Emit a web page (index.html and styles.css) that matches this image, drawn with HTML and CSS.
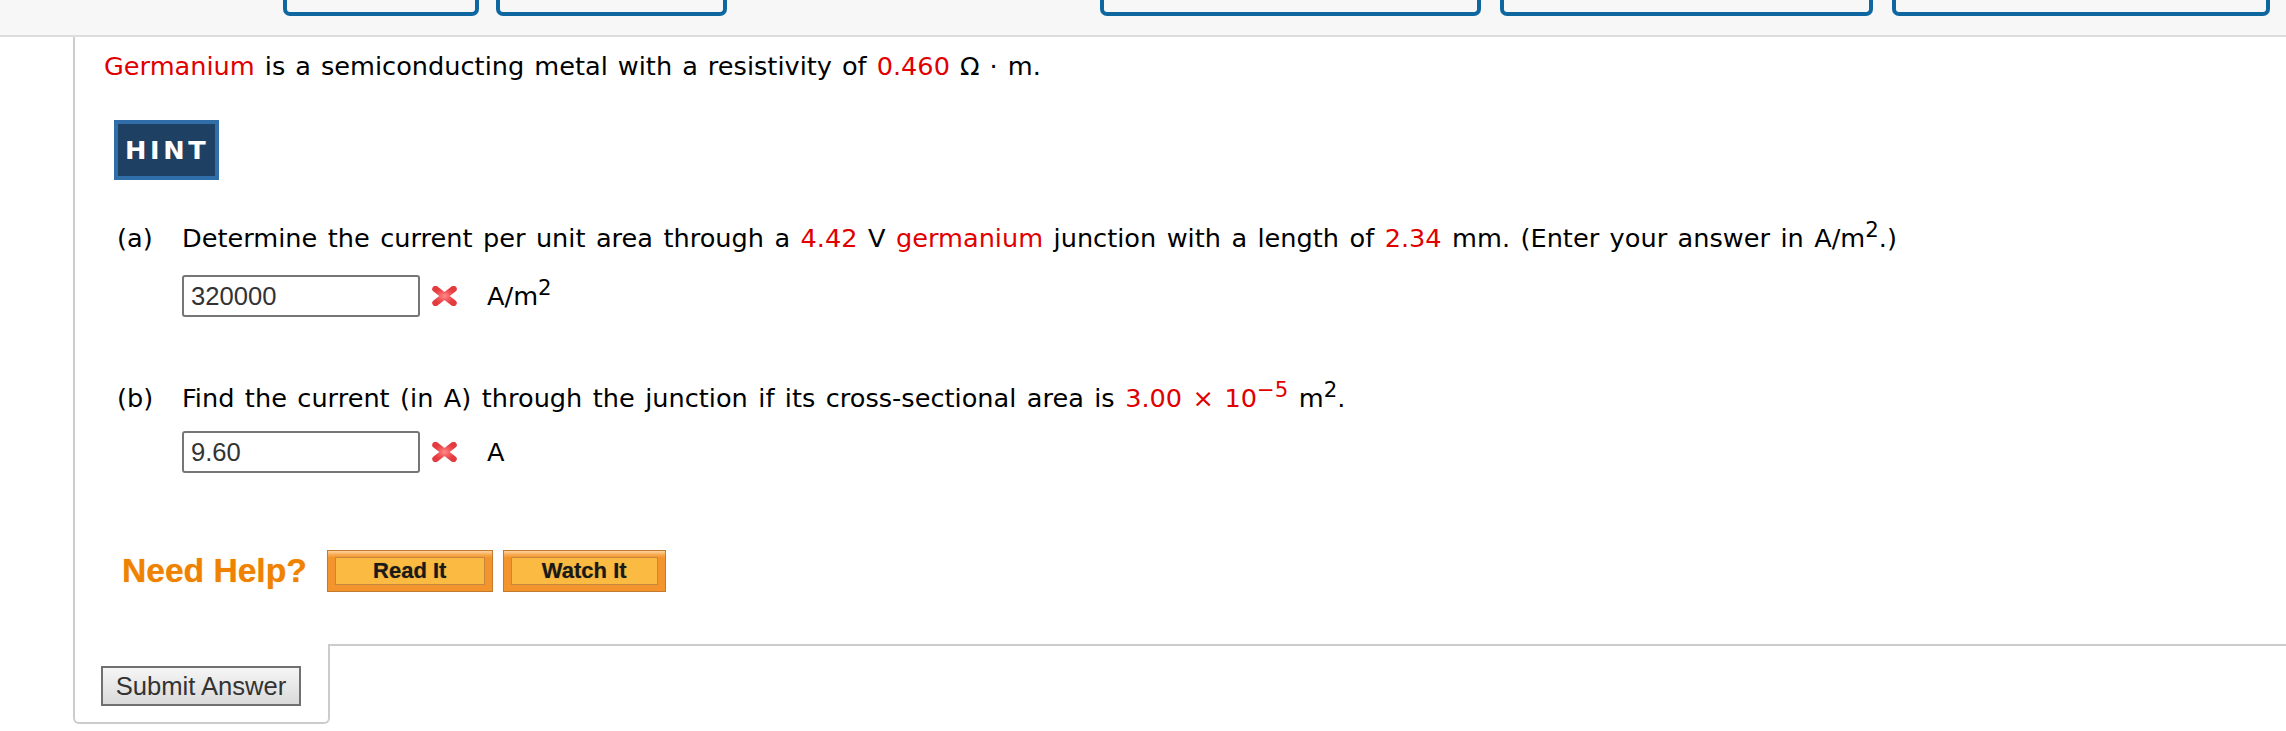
FILE: index.html
```html
<!DOCTYPE html>
<html lang="en">
<head>
<meta charset="utf-8">
<title>Question</title>
<link rel="stylesheet" href="styles.css">
</head>
<body>
<div class="topbar">
  <div class="navtab t1"></div>
  <div class="navtab t2"></div>
  <div class="navtab t3"></div>
  <div class="navtab t4"></div>
  <div class="navtab t5"></div>
</div>
<div class="assignment">
  <div class="question">
    <p class="intro"><span class="red">Germanium</span> is a semiconducting metal with a resistivity of <span class="red">0.460</span> Ω · m.</p>
    <div class="hint"><span>HINT</span></div>

    <div class="part part-a">
      <div class="label">(a)</div>
      <div class="ptext">Determine the current per unit area through a <span class="red">4.42</span> V <span class="red">germanium</span> junction with a length of <span class="red">2.34</span> mm. (Enter your answer in A/m<sup>2</sup>.)</div>
    </div>
    <div class="answer answer-a">
      <input class="ans" type="text" value="320000" readonly>
      <svg class="xmark" viewBox="0 0 25 20" width="25" height="20" aria-hidden="true">
        <defs>
          <radialGradient id="xg" cx="50%" cy="50%" r="60%">
            <stop offset="0" stop-color="#ff8a8a"/>
            <stop offset="0.55" stop-color="#f2575a"/>
            <stop offset="1" stop-color="#e33b3f"/>
          </radialGradient>
        </defs>
        <path d="M3.5 3 L21.5 17 M21.5 3 L3.5 17" stroke="url(#xg)" stroke-width="6.5" stroke-linecap="round" fill="none"/>
      </svg>
      <span class="unit">A/m<sup>2</sup></span>
    </div>

    <div class="part part-b">
      <div class="label">(b)</div>
      <div class="ptext">Find the current (in A) through the junction if its cross-sectional area is <span class="red">3.00 × 10<sup>−5</sup></span> m<sup>2</sup>.</div>
    </div>
    <div class="answer answer-b">
      <input class="ans" type="text" value="9.60" readonly>
      <svg class="xmark" viewBox="0 0 25 20" width="25" height="20" aria-hidden="true">
        <path d="M3.5 3 L21.5 17 M21.5 3 L3.5 17" stroke="url(#xg)" stroke-width="6.5" stroke-linecap="round" fill="none"/>
      </svg>
      <span class="unit">A</span>
    </div>

    <div class="help">
      <span class="need">Need Help?</span>
      <div class="helpbtn read"><span>Read It</span></div>
      <div class="helpbtn watch"><span>Watch It</span></div>
    </div>
  </div>
  <div class="footer">
    <div class="subtab"><button class="submit" type="button">Submit Answer</button></div>
    <div class="rest"></div>
  </div>
</div>
</body>
</html>
```
FILE: styles.css
```css
html, body {
  margin: 0;
  padding: 0;
  background: #ffffff;
}
body {
  font-family: "DejaVu Sans", Verdana, sans-serif;
  font-size: 25.6px;
  color: #000;
}
.topbar {
  height: 35px;
  background: #f7f7f7;
  border-bottom: 2px solid #dddddd;
  display: flex;
  align-items: flex-start;
}
.navtab {
  height: 16px;
  box-sizing: border-box;
  border: 4px solid #0f67a0;
  border-top: none;
  border-radius: 0 0 7px 7px;
}
.t1 { margin-left: 283px; width: 196px; }
.t2 { margin-left: 17px; width: 231px; }
.t3 { margin-left: 373px; width: 381px; }
.t4 { margin-left: 19px; width: 373px; }
.t5 { margin-left: 19px; width: 378px; }

.assignment {
  margin-left: 73px;
}
.question {
  border-left: 2px solid #cccccc;
  padding: 11px 0 52px 29px;
}
.red { color: #e00000; }
sup {
  font-size: 0.83em;
  line-height: 0;
  vertical-align: 10px;
}
.intro {
  margin: 0;
  line-height: 36px;
  white-space: nowrap;
  word-spacing: 1.9px;
}
.hint {
  margin: 36px 0 0 10px;
  width: 105px;
  height: 60px;
  box-sizing: border-box;
  border: 4px solid #2f6ea8;
  background: #1e4062;
  display: flex;
  align-items: center;
  padding-left: 7px;
}
.hint span {
  color: #ffffff;
  font-weight: bold;
  font-size: 25.6px;
  letter-spacing: 3.6px;
  line-height: 30px;
}
.part {
  display: flex;
  margin-left: 13px;
  line-height: 36px;
  white-space: nowrap;
}
.ptext {
  word-spacing: 2.3px;
}
.part-a { margin-top: 40px; }
.part-b { margin-top: 63px; }
.label {
  width: 65px;
  flex: none;
}
.answer {
  display: flex;
  align-items: center;
  margin-left: 78px;
  line-height: 36px;
}
.answer-a { margin-top: 19px; }
.answer-b { margin-top: 15px; }
.ans {
  width: 238px;
  height: 42px;
  box-sizing: border-box;
  border: 2px solid #767676;
  border-radius: 3px;
  padding: 0 7px;
  margin: 0;
  font-family: "Liberation Sans", Arial, sans-serif;
  font-size: 25.6px;
  color: #333333;
  background: #ffffff;
  outline: none;
}
.xmark {
  margin-left: 12px;
  flex: none;
}
.unit {
  margin-left: 30px;
}
.help {
  display: flex;
  align-items: center;
  margin: 77px 0 0 18px;
  height: 42px;
}
.need {
  font-family: "Liberation Sans", Arial, sans-serif;
  font-weight: bold;
  font-size: 33.6px;
  line-height: 42px;
  color: #ef8200;
  text-shadow: 0 0 1px rgba(239, 130, 0, 0.6);
}
.helpbtn {
  height: 42px;
  box-sizing: border-box;
  border: 1px solid #c47a2c;
  background: linear-gradient(#fcd4a2 0, #f7a74a 4px, #f4942c 7px, #f4942c 100%);
  padding: 6px 7px;
}
.helpbtn span {
  display: flex;
  height: 100%;
  box-sizing: border-box;
  border: 1px solid #c48640;
  background: #fbbb42;
  align-items: center;
  justify-content: center;
  font-family: "Liberation Sans", Arial, sans-serif;
  font-weight: bold;
  font-size: 22px;
  color: #1a1a1a;
  text-shadow: 0 0 1px rgba(0, 0, 0, 0.4);
}
.read { width: 166px; margin-left: 20px; }
.watch { width: 163px; margin-left: 10px; }

.footer {
  display: flex;
  align-items: flex-start;
}
.subtab {
  width: 257px;
  box-sizing: border-box;
  border: 2px solid #cccccc;
  border-top: none;
  border-radius: 0 0 6px 6px;
  padding: 22px 0 16px 26px;
}
.submit {
  display: block;
  width: 200px;
  height: 40px;
  box-sizing: border-box;
  border: 2px solid #707070;
  border-radius: 0;
  background: linear-gradient(#f5f5f5, #dadada);
  font-family: "Liberation Sans", Arial, sans-serif;
  font-size: 25.6px;
  color: #333333;
  padding: 0;
  margin: 0;
}
.rest {
  flex: 1;
  border-top: 2px solid #cccccc;
}
```
